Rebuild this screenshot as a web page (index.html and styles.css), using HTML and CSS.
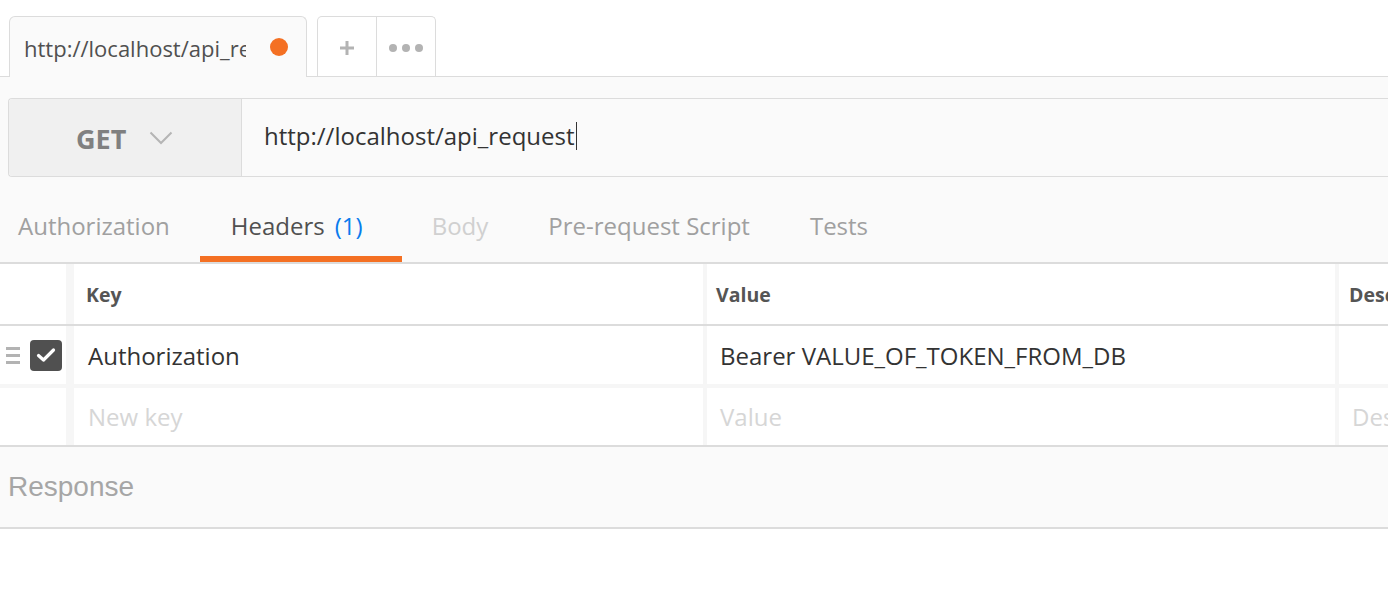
FILE: index.html
```html
<!DOCTYPE html>
<html>
<head>
<meta charset="utf-8">
<link rel="stylesheet" href="styles.css">
</head>
<body>
<div class="tabbar">
  <div class="req-tab">
    <span class="req-tab-title">http://localhost/api_request</span>
    <span class="dot"></span>
  </div>
  <div class="tab-actions">
    <div class="tab-btn">
      <svg width="16" height="16" viewBox="0 0 16 16"><path d="M8 1v14M1 8h14" stroke="#b3b3b3" stroke-width="3"/></svg>
    </div>
    <div class="tab-btn">
      <svg width="34" height="10" viewBox="0 0 34 10"><circle cx="4" cy="5" r="4" fill="#b3b3b3"/><circle cx="17" cy="5" r="4" fill="#b3b3b3"/><circle cx="30" cy="5" r="4" fill="#b3b3b3"/></svg>
    </div>
  </div>
</div>
<div class="main">
  <div class="urlbar">
    <div class="method">
      <span class="method-name">GET</span>
      <svg class="chev" width="24" height="14" viewBox="0 0 24 14"><path d="M1.5 1.5L12 12L22.5 1.5" fill="none" stroke="#b5b5b5" stroke-width="2"/></svg>
    </div>
    <div class="url">
      <span class="url-text">http://localhost/api_request</span><span class="caret"></span>
    </div>
  </div>
  <div class="subtabs">
    <div class="subtab first">Authorization</div>
    <div class="subtab active">Headers<span class="count">(1)</span></div>
    <div class="subtab disabled">Body</div>
    <div class="subtab">Pre-request Script</div>
    <div class="subtab">Tests</div>
  </div>
  <div class="table">
    <div class="row head">
      <div class="cell c0"></div>
      <div class="cell ckey">Key</div>
      <div class="cell cval">Value</div>
      <div class="cell cdesc">Description</div>
    </div>
    <div class="row body sep">
      <div class="cell c0">
        <span class="handle"><i></i><i></i><i></i></span>
        <span class="check">
          <svg width="20" height="16" viewBox="0 0 20 16"><path d="M2.5 8.5L7.5 13L17.5 3" fill="none" stroke="#fff" stroke-width="3.2" stroke-linecap="round" stroke-linejoin="round"/></svg>
        </span>
      </div>
      <div class="cell ckey">Authorization</div>
      <div class="cell cval">Bearer VALUE_OF_TOKEN_FROM_DB</div>
      <div class="cell cdesc"></div>
    </div>
    <div class="row body ph">
      <div class="cell c0"></div>
      <div class="cell ckey">New key</div>
      <div class="cell cval">Value</div>
      <div class="cell cdesc">Description</div>
    </div>
  </div>
  <div class="response">Response</div>
</div>
</body>
</html>
```
FILE: styles.css
```css
html, body {
  margin: 0;
  padding: 0;
  background: #fff;
  width: 1388px;
  height: 590px;
  overflow: hidden;
  font-family: "Open Sans", "Liberation Sans", sans-serif;
}

.tabbar {
  height: 76px;
  border-bottom: 1px solid #dcdcdc;
  display: flex;
  align-items: flex-end;
  padding-left: 9px;
  box-sizing: content-box;
}

.req-tab {
  width: 298px;
  box-sizing: border-box;
  border: 1px solid #dcdcdc;
  border-bottom: none;
  border-radius: 6px 6px 0 0;
  background: #fafafa;
  margin-bottom: -1px;
  height: 61px;
  display: flex;
  align-items: center;
  padding: 0 18px 0 14px;
  gap: 24px;
}

.req-tab-title {
  flex: 1;
  overflow: hidden;
  white-space: nowrap;
  font-size: 22px;
  color: #505050;
  margin-top: 1px;
}

.dot {
  width: 18px;
  height: 18px;
  border-radius: 50%;
  background: #f47023;
  flex: none;
}

.tab-actions {
  margin-left: 10px;
  height: 60px;
  box-sizing: border-box;
  border: 1px solid #dcdcdc;
  border-bottom: none;
  border-radius: 5px 5px 0 0;
  display: flex;
  background: #fff;
}

.tab-btn {
  width: 58px;
  display: flex;
  align-items: center;
  justify-content: center;
  padding-top: 2px;
}

.tab-btn + .tab-btn {
  border-left: 1px solid #dcdcdc;
}

.main {
  background: #fafafa;
  padding-top: 21px;
}

.urlbar {
  margin-left: 8px;
  height: 79px;
  box-sizing: border-box;
  border: 1px solid #dcdcdc;
  border-right: none;
  border-radius: 4px 0 0 4px;
  display: flex;
}

.method {
  width: 233px;
  background: #f0f0f0;
  border-right: 1px solid #dcdcdc;
  border-radius: 4px 0 0 4px;
  display: flex;
  align-items: center;
  padding-left: 67px;
  box-sizing: border-box;
  gap: 23px;
}

.method-name {
  font-weight: 700;
  font-size: 27px;
  color: #808080;
  margin-top: 2px;
}

.chev {
  margin-top: 1px;
}

.url {
  flex: 1;
  display: flex;
  align-items: center;
  padding-left: 22px;
  background: #fafafa;
}

.url-text {
  font-size: 24px;
  color: #333;
  margin-top: -4px;
}

.caret {
  width: 1px;
  height: 28px;
  background: #333;
  margin-left: 1px;
  margin-top: -3px;
}

.subtabs {
  height: 85px;
  display: flex;
  border-bottom: 2px solid #dcdcdc;
}

.subtab {
  padding: 0 30px;
  display: flex;
  align-items: center;
  font-size: 24px;
  color: #a0a0a0;
  border-bottom: 6px solid transparent;
  padding-top: 17px;
}

.subtab.first {
  padding-left: 18px;
}

.subtab.active {
  color: #505050;
  border-bottom-color: #f47023;
  padding-left: 31px;
  padding-right: 39px;
}

.count {
  color: #097bed;
  margin-left: 10px;
}

.subtab.disabled {
  color: #d0d0d0;
}

.table {
  background: #fff;
  border-bottom: 2px solid #dcdcdc;
}

.row {
  display: flex;
}

.row.head {
  height: 62px;
  border-bottom: 2px solid #dcdcdc;
  box-sizing: border-box;
}

.row.body {
  height: 58px;
}

.row.sep {
  border-bottom: 4px solid #f6f6f6;
  height: 62px;
  box-sizing: border-box;
}

.row.ph {
  height: 57px;
}

.cell {
  display: flex;
  align-items: center;
  white-space: nowrap;
  overflow: hidden;
  box-sizing: border-box;
}

.c0 {
  width: 66px;
  flex: none;
}

.ckey {
  width: 637px;
  flex: none;
  border-left: 8px solid #f6f6f6;
}

.cval {
  width: 632px;
  flex: none;
  border-left: 4px solid #f6f6f6;
}

.cdesc {
  flex: 1;
  border-left: 4px solid #f6f6f6;
}

.head .cell {
  font-weight: 700;
  font-size: 19.5px;
  color: #555;
  padding-top: 1px;
}

.head .ckey { padding-left: 12px; }
.head .cval { padding-left: 9px; }
.head .cdesc { padding-left: 10px; }

.body .cell {
  font-size: 24px;
  color: #333;
}

.body .ckey { padding-left: 14px; }
.body .cval { padding-left: 13px; }
.body .cdesc { padding-left: 13px; }

.ph .cell {
  color: #d6d6d6;
}

.body .c0 {
  padding-left: 6px;
  gap: 10px;
}

.handle {
  display: flex;
  flex-direction: column;
  gap: 4px;
  width: 14px;
}

.handle i {
  display: block;
  height: 3px;
  background: #b3b3b3;
}

.check {
  width: 32px;
  height: 31px;
  border-radius: 4px;
  background: #505050;
  display: flex;
  align-items: center;
  justify-content: center;
}

.response {
  height: 80px;
  border-bottom: 2px solid #dcdcdc;
  display: flex;
  align-items: center;
  padding-left: 8px;
  font-family: "Liberation Sans", Arial, sans-serif;
  font-size: 28px;
  color: #a6a6a6;
  background: #fafafa;
}
```
